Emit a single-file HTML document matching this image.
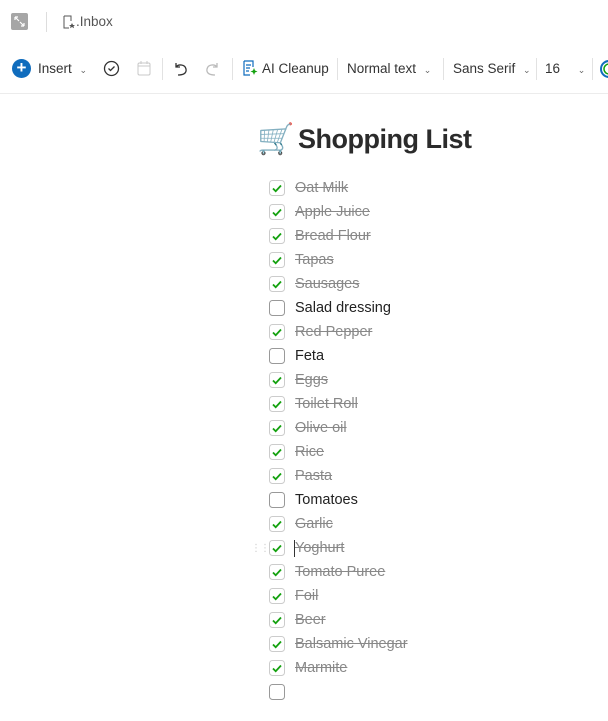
<!DOCTYPE html>
<html><head><meta charset="utf-8"><style>
body{margin:0;width:608px;height:721px;background:#fff;font-family:"Liberation Sans","DejaVu Sans",sans-serif;position:relative;overflow:hidden;color:#222}
.a{position:absolute}
.tb{font-size:13.5px;color:#333;white-space:nowrap}
.chev{font-size:9px;color:#666}
.sep{position:absolute;width:1px;height:22px;background:#e2e2e2;top:58px}
.row{position:absolute;left:269px;height:24px;display:flex;align-items:center}
.cb{width:14px;height:14px;border:1px solid #999;border-radius:3.5px;box-sizing:content-box;position:relative;background:#fff}
.cb.c svg{position:absolute;left:1px;top:1px}
.t{margin-left:10px;font-size:14.5px;color:#222}
.t.s{color:#888;text-decoration:line-through}
</style></head><body>
<div class="a" style="left:11px;top:13px;width:17px;height:17px;background:#a6a6a6;border-radius:2px"><svg width="17" height="17"><path d="M4 4l4 4M4 4h3M4 4v3M13 13l-4-4M13 13h-3M13 13v-3" stroke="#fff" stroke-width="1.2" fill="none"/></svg></div>
<div class="a" style="left:46px;top:12px;width:1px;height:20px;background:#ddd"></div>
<svg class="a" style="left:63px;top:15px" width="12" height="14"><path d="M1 1h7v5M1 1v12h5" stroke="#555" fill="none"/><path d="M9 8l1 2h2l-1.5 1.2.6 2-2.1-1.2-2 1.2.6-2L6 10h2z" fill="#555"/></svg>
<div class="a tb" style="left:76px;top:14px;color:#555">.Inbox</div>
<div class="a" style="left:0;top:93px;width:608px;height:1px;background:#ececec"></div>
<div class="a" style="left:12px;top:59px;width:19px;height:19px;border-radius:50%;background:#0f6cbd;color:#fff;font-weight:bold;font-size:17px;line-height:18px;text-align:center">+</div>
<div class="a tb" style="left:38px;top:61px">Insert <span class="chev" style="margin-left:4px">&#8964;</span></div>
<svg class="a" style="left:103px;top:60px" width="17" height="17"><circle cx="8.5" cy="8.5" r="7" stroke="#333" stroke-width="1.3" fill="none"/><path d="M5.5 8.5l2 2 4-4" stroke="#333" stroke-width="1.3" fill="none"/></svg>
<svg class="a" style="left:136px;top:60px" width="16" height="17"><rect x="2" y="3" width="12" height="12" rx="1.5" stroke="#c8c8c8" fill="none"/><path d="M2 6h12M5 1v3M11 1v3" stroke="#c8c8c8"/></svg>
<div class="sep" style="left:162px"></div>
<svg class="a" style="left:172px;top:60px" width="18" height="17"><path d="M4 3v4h4M4 7c2-3 9-3 10 2s-4 6-8 6" stroke="#333" stroke-width="1.3" fill="none"/></svg>
<svg class="a" style="left:203px;top:60px" width="18" height="17"><path d="M14 3v4h-4M14 7c-2-3-9-3-10 2s4 6 8 6" stroke="#bbb" stroke-width="1.3" fill="none"/></svg>
<div class="sep" style="left:232px"></div>
<svg class="a" style="left:242px;top:60px" width="17" height="17"><path d="M2 1h9v6M2 1v14h6M4 5h5M4 8h4M4 11h3" stroke="#0f6cbd" stroke-width="1.2" fill="none"/><path d="M12 8l1 2.5 2.5 1-2.5 1-1 2.5-1-2.5-2.5-1 2.5-1z" fill="#13a10e"/></svg>
<div class="a tb" style="left:262px;top:61px">AI Cleanup</div>
<div class="sep" style="left:337px"></div>
<div class="a tb" style="left:347px;top:61px">Normal text <span class="chev" style="margin-left:4px">&#8964;</span></div>
<div class="sep" style="left:443px"></div>
<div class="a tb" style="left:453px;top:61px">Sans Serif <span class="chev" style="margin-left:4px">&#8964;</span></div>
<div class="sep" style="left:536px"></div>
<div class="a tb" style="left:545px;top:61px">16 <span class="chev" style="margin-left:14px">&#8964;</span></div>
<div class="sep" style="left:592px"></div>
<svg class="a" style="left:600px;top:59px" width="8" height="20"><path d="M9 2a8 8 0 0 0 0 16" stroke="#0f6cbd" stroke-width="2" fill="none"/><path d="M9 5a5 5 0 0 0 0 10" stroke="#13a10e" stroke-width="1.5" fill="none"/></svg>
<div class="a" style="left:257px;top:122px;font-size:30px;line-height:36px;font-family:'DejaVu Sans',sans-serif">🛒</div>
<div class="a" style="left:298px;top:124px;font-size:27px;font-weight:bold;color:#2b2b2b;letter-spacing:-0.5px">Shopping List</div>
<div class="a" style="left:251px;top:543px;color:#ccc;font-size:10px;letter-spacing:-1px">&#8942;&#8942;</div>
<div class="a" style="left:294px;top:540px;width:1px;height:17px;background:#333"></div>
<div id="list"></div>
<script>
var items=[["Oat Milk",1],["Apple Juice",1],["Bread Flour",1],["Tapas",1],["Sausages",1],["Salad dressing",0],["Red Pepper",1],["Feta",0],["Eggs",1],["Toilet Roll",1],["Olive oil",1],["Rice",1],["Pasta",1],["Tomatoes",0],["Garlic",1],["Yoghurt",1],["Tomato Puree",1],["Foil",1],["Beer",1],["Balsamic Vinegar",1],["Marmite",1],["",0]];
var h="";items.forEach(function(it,i){var y=176+i*24;h+='<div class="row" style="top:'+y+'px"><div class="cb'+(it[1]?' c':'')+'" style="border-color:'+(it[1]?'#ccc':'#999')+'">'+(it[1]?'<svg width="12" height="12"><path d="M2 6.5l2.7 2.7L10 3.5" stroke="#13a10e" stroke-width="1.8" fill="none"/></svg>':'')+'</div><span class="t'+(it[1]?' s':'')+'">'+it[0]+'</span></div>';});
document.getElementById("list").innerHTML=h;
</script>
</body></html>
